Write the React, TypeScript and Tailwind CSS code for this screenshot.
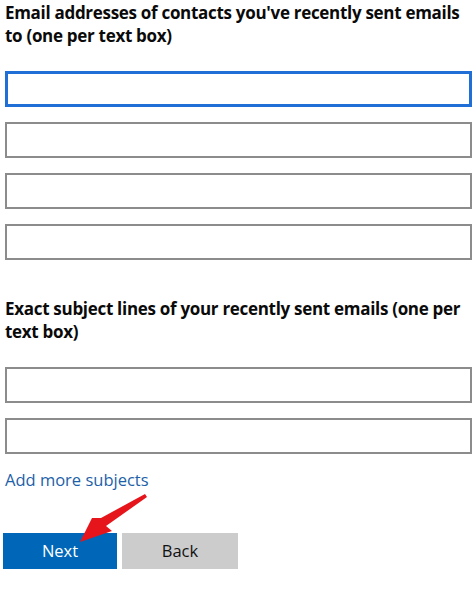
export default function App() {
  const font = { fontFamily: '"Open Sans", "Noto Sans", Arial, sans-serif' };
  return (
    <div className="relative w-[474px] h-[590px] bg-white text-[#0a0a0a] overflow-hidden" style={font}>
      <div className="pl-[5px] pr-[2px] pt-[1px]">
        <h2 className="text-[17px] leading-[23px] font-bold tracking-[-0.3px] whitespace-nowrap">
          Email addresses of contacts you've recently sent emails
          <br />
          to (one per text box)
        </h2>
        <div className="mt-[24px] flex flex-col gap-[15px] w-[467px]">
          <input className="h-[36px] border-[3px] border-[#1f6fd6] outline-none bg-white" />
          <input className="h-[36px] border-2 border-[#8c8c8c] outline-none bg-white" />
          <input className="h-[36px] border-2 border-[#8c8c8c] outline-none bg-white" />
          <input className="h-[36px] border-2 border-[#8c8c8c] outline-none bg-white" />
        </div>
        <h2 className="mt-[37px] text-[17px] leading-[23px] font-bold tracking-[-0.3px] whitespace-nowrap">
          Exact subject lines of your recently sent emails (one per
          <br />
          text box)
        </h2>
        <div className="mt-[24px] flex flex-col gap-[15px] w-[467px]">
          <input className="h-[36px] border-2 border-[#8c8c8c] outline-none bg-white" />
          <input className="h-[36px] border-2 border-[#8c8c8c] outline-none bg-white" />
        </div>
        <a className="block mt-[14px] text-[16.5px] leading-[24px] text-[#1d5fa8] w-fit">Add more subjects</a>
      </div>
      <div className="mt-[41px] pl-[3px] flex gap-[5px]">
        <button className="w-[114px] h-[36px] bg-[#0067b8] text-white text-[16.5px]">Next</button>
        <button className="w-[116px] h-[36px] bg-[#cccccc] text-[#111] text-[16.5px]">Back</button>
      </div>
      <svg className="absolute inset-0 pointer-events-none" width="474" height="590" viewBox="0 0 474 590">
        <polygon
          points="145,494 101,518 92,518 80,542 112,531 106,526 147,497"
          fill="#e6151b"
        />
      </svg>
    </div>
  );
}
